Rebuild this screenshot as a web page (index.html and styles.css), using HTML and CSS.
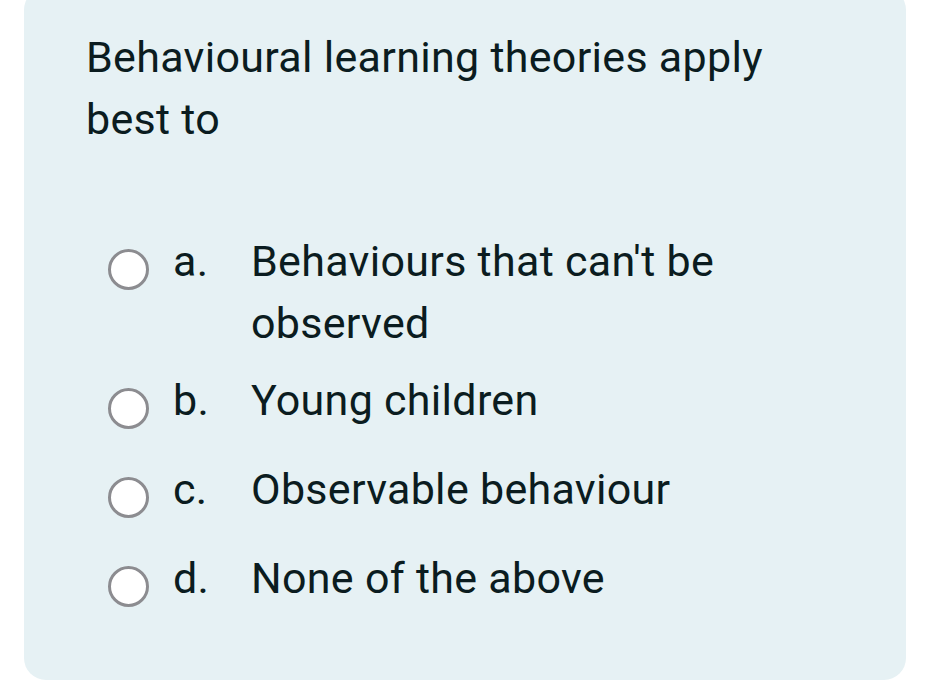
FILE: index.html
```html
<!DOCTYPE html>
<html lang="en">
<head>
<meta charset="utf-8">
<title>Question</title>
<link rel="stylesheet" href="styles.css">
</head>
<body>
<div class="card">
  <div class="question">Behavioural learning theories apply<br>best to</div>
  <div class="options">
    <div class="option">
      <span class="radio"></span>
      <span class="letter">a.</span>
      <span class="text">Behaviours that can't be<br>observed</span>
    </div>
    <div class="option">
      <span class="radio"></span>
      <span class="letter">b.</span>
      <span class="text">Young children</span>
    </div>
    <div class="option">
      <span class="radio"></span>
      <span class="letter">c.</span>
      <span class="text">Observable behaviour</span>
    </div>
    <div class="option">
      <span class="radio"></span>
      <span class="letter">d.</span>
      <span class="text">None of the above</span>
    </div>
  </div>
</div>
</body>
</html>
```

FILE: styles.css
```css
html, body {
  margin: 0;
  padding: 0;
  background: #ffffff;
  overflow: hidden;
}

body {
  font-family: Roboto, "Noto Sans", sans-serif;
  color: #0b1c20;
}

.card {
  margin: -12px 22px 0 24px;
  height: 692px;
  box-sizing: border-box;
  background: #e6f1f4;
  border-radius: 22px;
  padding: 38px 0 0 62px;
}

.question {
  font-size: 43px;
  line-height: 62px;
  letter-spacing: 0.3px;
}

.options {
  display: flex;
  flex-direction: column;
  gap: 27px;
  margin-top: 80px;
  padding-left: 22px;
}

.option {
  display: flex;
  align-items: flex-start;
  font-size: 43px;
  line-height: 62px;
  letter-spacing: 0.3px;
}

.option:first-child {
  margin-bottom: -12px;
}

.radio {
  flex: none;
  width: 41px;
  height: 41px;
  box-sizing: border-box;
  border: 3.5px solid #8c8c90;
  border-radius: 50%;
  background: #ffffff;
  margin-top: 19px;
}

.letter {
  flex: none;
  width: 78px;
  margin-left: 24px;
}

.text {
  flex: 1;
}
```
